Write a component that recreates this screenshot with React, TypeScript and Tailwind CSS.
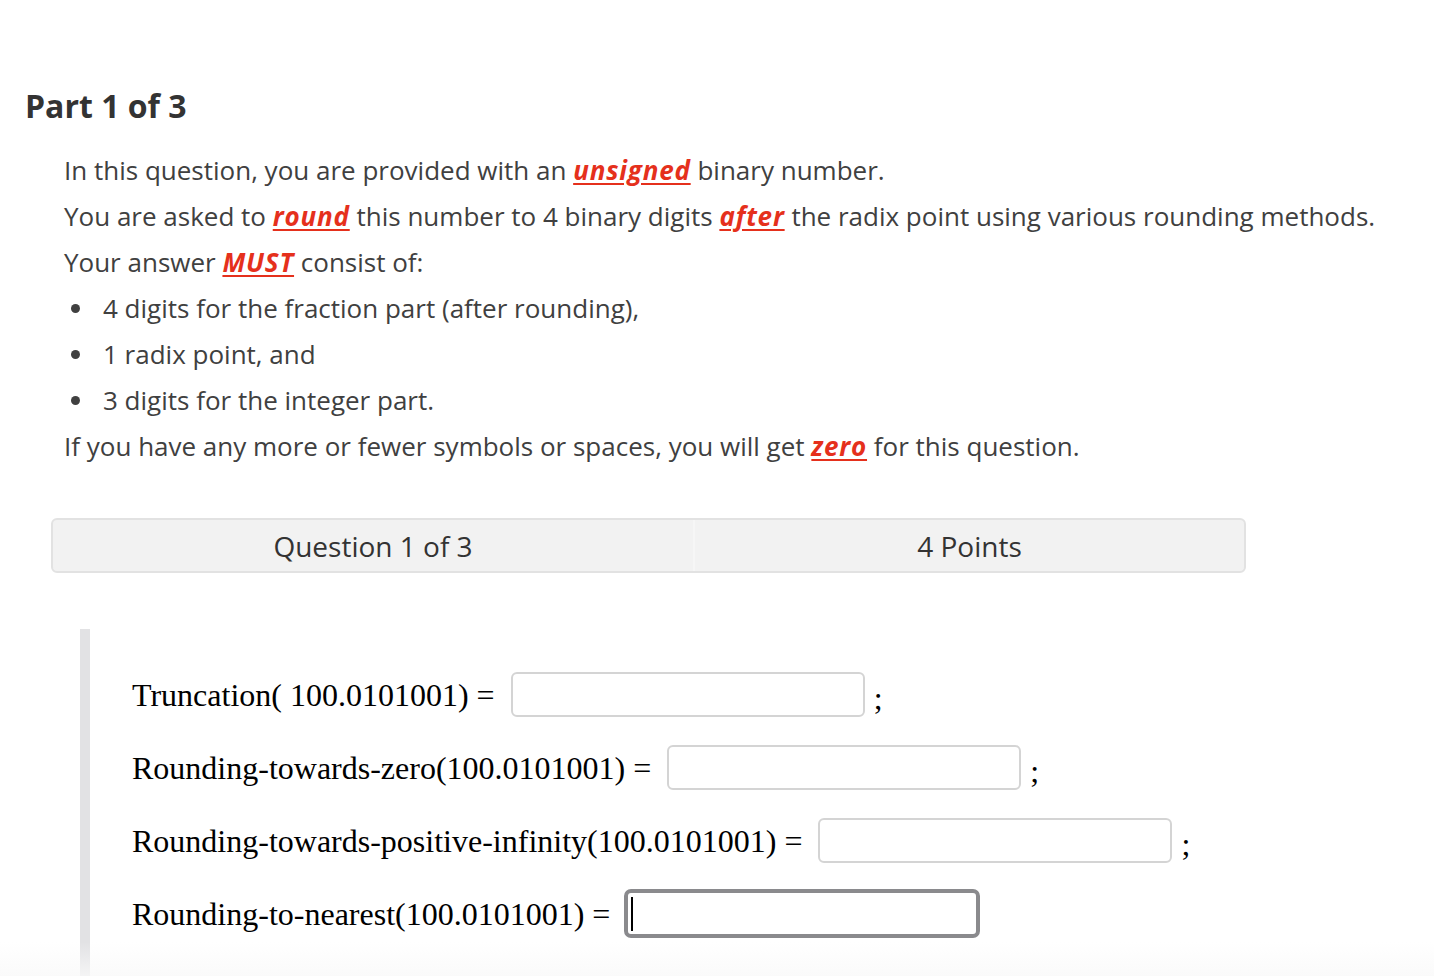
import React from "react";

// ── Emphasis word (red, bold italic, underlined) ────────────────────────────

function Em({ children }: { children: React.ReactNode }) {
  return (
    <span className="font-bold italic tracking-[0.8px] underline decoration-2 underline-offset-[3px] text-[#e5301c]">
      {children}
    </span>
  );
}

function Bullet({ children }: { children: React.ReactNode }) {
  return (
    <li className="flex items-center">
      <span className="ml-[7px] w-[9px] h-[9px] rounded-full bg-[#404040]" />
      <span className="ml-[23px]">{children}</span>
    </li>
  );
}

// ── Answer row ──────────────────────────────────────────────────────────────

function AnswerRow({
  label,
  focused,
  semicolon = true,
}: {
  label: string;
  focused?: boolean;
  semicolon?: boolean;
}) {
  return (
    <div className="flex items-center h-[73px]">
      <span className="whitespace-pre">{label}</span>
      {focused ? (
        <div className="ml-[14px] w-[356px] h-[49px] rounded-[7px] border-[4px] border-[#8a8a8d] bg-white flex items-center pl-[3px]">
          <div className="w-[2px] h-[34px] bg-black" />
        </div>
      ) : (
        <div className="ml-[16px] w-[354px] h-[45px] rounded-[6px] border-2 border-[#d4d4d4] bg-white" />
      )}
      {semicolon && <span className="ml-[9px] mt-[6px]">;</span>}
    </div>
  );
}

export default function App() {
  return (
    <div className="relative min-h-[976px] h-[976px] overflow-hidden bg-white font-['Open_Sans',sans-serif] text-[#404040]">
      <div className="pt-[84px] pl-[25px]">
        <h2 className="text-[32px] font-bold leading-[44px] text-[#333]">Part 1 of 3</h2>

        {/* Instructions */}
        <div className="mt-[19px] pl-[39px] text-[26px] leading-[46px]">
          <p>
            In this question, you are provided with an <Em>unsigned</Em> binary number.
          </p>
          <p>
            You are asked to <Em>round</Em> this number to 4 binary digits <Em>after</Em> the radix point using
            various rounding methods.
          </p>
          <p>
            Your answer <Em>MUST</Em> consist of:
          </p>
          <ul>
            <Bullet>4 digits for the fraction part (after rounding),</Bullet>
            <Bullet>1 radix point, and</Bullet>
            <Bullet>3 digits for the integer part.</Bullet>
          </ul>
          <p>
            If you have any more or fewer symbols or spaces, you will get <Em>zero</Em> for this question.
          </p>
        </div>

        {/* Question header bar */}
        <div className="mt-[49px] ml-[26px] w-[1195px] h-[55px] flex rounded-[6px] border-2 border-[#e2e2e2] bg-[#f2f2f2] text-[28px] text-[#333]">
          <div className="w-[642px] flex items-center justify-center border-r-2 border-[#f6f6f6]">
            Question 1 of 3
          </div>
          <div className="flex-1 flex items-center justify-center">4 Points</div>
        </div>

        {/* Answers */}
        <div className="mt-[56px] ml-[55px] border-l-[10px] border-[#e2e2e4] h-[400px]">
          <div className="pl-[42px] pt-[29px] font-['Liberation_Serif','Times_New_Roman',serif] text-[32px] text-black">
            <AnswerRow label="Truncation( 100.0101001) =" />
            <AnswerRow label="Rounding-towards-zero(100.0101001) =" />
            <AnswerRow label="Rounding-towards-positive-infinity(100.0101001) =" />
            <AnswerRow label="Rounding-to-nearest(100.0101001) =" focused semicolon={false} />
          </div>
        </div>
      </div>

      {/* faint fade at the bottom edge */}
      <div className="pointer-events-none absolute inset-x-0 bottom-0 h-[34px] bg-gradient-to-b from-white/0 to-[#f9f9f9]/80" />
    </div>
  );
}
